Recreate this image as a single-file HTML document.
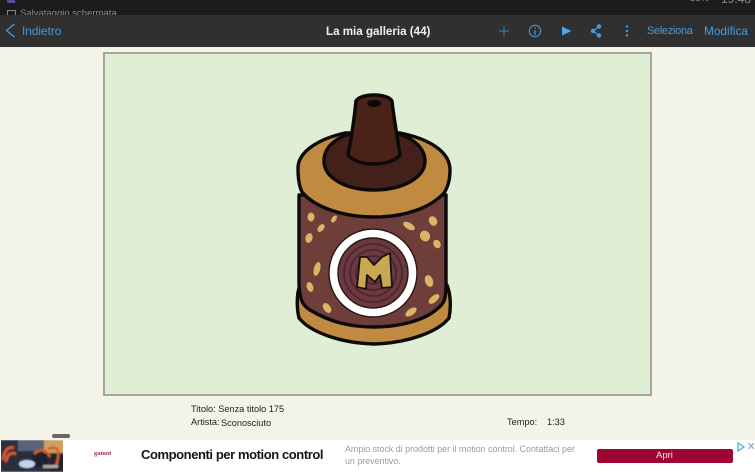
<!DOCTYPE html>
<html><head><meta charset="utf-8">
<style>
html,body{margin:0;padding:0}
body{width:755px;height:472px;position:relative;overflow:hidden;background:#f3f3e7;font-family:"Liberation Sans",sans-serif}
div.t{position:absolute;white-space:nowrap;line-height:1}
.bl{color:#4a9ad6;font-size:11.8px}
</style></head><body>
<div style="position:absolute;left:0;top:0;width:755px;height:15px;background:#1c1c1e;overflow:hidden">
<div style="position:absolute;left:7px;top:-4px;width:8px;height:7px;background:#5a4a9a"></div>
<div style="position:absolute;left:7px;top:10px;width:7px;height:7px;border:1px solid #888"></div>
<div class="t" style="left:20px;top:9px;font-size:9.5px;color:#8a8a8a">Salvataggio schermata</div>
<div class="t" style="left:690px;top:-6px;font-size:9.5px;color:#8a8a8a">33%</div>
<div class="t" style="left:721px;top:-7px;font-size:12px;color:#8a8a8a">19:48</div>
</div>
<div style="position:absolute;left:0;top:15px;width:755px;height:32px;background:#303030"></div>
<svg style="position:absolute;left:0;top:15px" width="755" height="32" fill="none" stroke="#4a9ad6">
<path d="M14.5 9 L6.5 15.5 L14.5 22" stroke-width="1.2"/>
<path d="M504 11V21M499 16H509" stroke-width="1" stroke="#3f7fb0"/>
<circle cx="535" cy="16" r="5.7" stroke-width="1"/><path d="M535 15V20M535 12V13.5" stroke-width="1.2"/>
<path d="M562 11.5 L571.5 16 L562 20.5Z" fill="#4aa6ee" stroke="none"/>
<path d="M599 11.5 L593 16 L599 20.5" stroke-width="1.2"/>
<circle cx="599" cy="11.5" r="2.2" fill="#4a9ad6" stroke="none"/><circle cx="593" cy="16" r="2.2" fill="#4a9ad6" stroke="none"/><circle cx="599" cy="20.5" r="2.2" fill="#4a9ad6" stroke="none"/>
<circle cx="627" cy="11.5" r="1.2" fill="#4a9ad6" stroke="none"/><circle cx="627" cy="16" r="1.2" fill="#4a9ad6" stroke="none"/><circle cx="627" cy="20.5" r="1.2" fill="#4a9ad6" stroke="none"/>
</svg>
<div class="t bl" style="left:22px;top:25.5px">Indietro</div>
<div class="t" style="left:326px;top:25.5px;font-size:11.6px;font-weight:bold;color:#f0f0f0">La mia galleria (44)</div>
<div class="t bl" style="left:647px;top:25.5px;font-size:11px;letter-spacing:-.3px">Seleziona</div>
<div class="t bl" style="left:704px;top:25.5px">Modifica</div>

<svg style="position:absolute;left:0;top:0" width="755" height="472">
<rect x="104" y="53" width="547" height="342" fill="#dfeed5" stroke="#a3a896" stroke-width="2"/>
<g stroke="#0c0a08" stroke-width="3.4" stroke-linejoin="round">
<path d="M300 285 C296 295 297 310 299 318 C310 332 340 343 374 344 C408 343 438 332 449 318 C451 308 451 295 447 285 Z" fill="#c08a40"/>
<path d="M299 195 L299 284 C300 300 302 305 310 310 C330 322 350 327 374 327 C400 327 425 320 437 309 C445 303 446 298 446 284 L446 195 Z" fill="#6e3f3a"/>
<path d="M298 168 C298 152 318 139 345 133 L400 133 C430 139 450 152 450 170 C450 180 448 187 444 193 C430 208 405 217 374 217 C345 217 315 208 302 192 C299 186 298 178 298 168 Z" fill="#c08a40"/>
<path d="M324 161 C324 146 338 137 350 134 L398 134 C414 138 425 149 425 161 C425 178 402 190 374 190 C346 190 324 178 324 161 Z" fill="#43201a"/>
<path d="M356 101 C358 97 366 95 374 95 C382 95 390 97 392 101 C394 120 398 140 400 155 C395 161 385 164 374 164 C363 164 353 161 348 155 C351 140 354 120 356 101 Z" fill="#4a2218"/>
</g>
<ellipse cx="374" cy="103.5" rx="7" ry="3.5" fill="#0c0a08"/>
<g fill="#d9b565">
<ellipse cx="311" cy="217" rx="3.5" ry="4.5"/><ellipse cx="321" cy="228" rx="2.8" ry="4.5" transform="rotate(40 321 228)"/><ellipse cx="334" cy="219" rx="2.2" ry="4" transform="rotate(35 334 219)"/>
<ellipse cx="309" cy="238" rx="3.5" ry="5" transform="rotate(15 309 238)"/><ellipse cx="317" cy="269" rx="3.2" ry="7" transform="rotate(15 317 269)"/><ellipse cx="310" cy="287" rx="3.2" ry="5" transform="rotate(-20 310 287)"/>
<ellipse cx="327" cy="308" rx="3.5" ry="5.5" transform="rotate(-35 327 308)"/>
<ellipse cx="409" cy="226" rx="3.2" ry="6.5" transform="rotate(-60 409 226)"/><ellipse cx="433" cy="221" rx="4" ry="5" transform="rotate(-30 433 221)"/><ellipse cx="425" cy="236" rx="5" ry="5.5" transform="rotate(-30 425 236)"/><ellipse cx="437" cy="244" rx="3.5" ry="4.5" transform="rotate(-30 437 244)"/>
<ellipse cx="429" cy="281" rx="4" ry="6" transform="rotate(-20 429 281)"/><ellipse cx="434" cy="299" rx="3.2" ry="6.5" transform="rotate(50 434 299)"/><ellipse cx="411" cy="312" rx="3.2" ry="6.5" transform="rotate(55 411 312)"/>
</g>
<circle cx="373" cy="273" r="44" fill="#fff" stroke="#2a1512" stroke-width="1.4"/>
<circle cx="373" cy="273" r="35" fill="#6a3a3e" stroke="#2a1512" stroke-width="1.4"/>
<g fill="none" stroke="#4f2433" stroke-width="1.8"><circle cx="373" cy="273" r="29"/><circle cx="373" cy="273" r="23"/><circle cx="373" cy="273" r="17"/><circle cx="373" cy="273" r="11"/></g>
<path d="M360 257 L367 257 L374 265 L382 257 L390 253 L392 287 L382 288 L380 275 L375 282 L367 275 L366 289 L357 287 Z" fill="#c8a850" stroke="#1a0f0a" stroke-width="1.8" stroke-linejoin="round"/>
</svg>

<div class="t" style="left:191px;top:404.5px;font-size:9.2px;color:#222">Titolo: Senza titolo 175</div>
<div class="t" style="left:191px;top:417.5px;font-size:9.2px;color:#222">Artista:</div>
<div class="t" style="left:221px;top:419px;font-size:9.2px;color:#222">Sconosciuto</div>
<div class="t" style="left:507px;top:417.5px;font-size:9.2px;color:#222">Tempo:</div>
<div class="t" style="left:547px;top:417.5px;font-size:9.2px;color:#222">1:33</div>
<div style="position:absolute;left:52px;top:434px;width:18px;height:4px;border-radius:2px;background:#666"></div>

<div style="position:absolute;left:0;top:439.5px;width:755px;height:32.5px;background:#fff"></div>
<svg style="position:absolute;left:0;top:440px" width="64" height="32">
<defs><filter id="b"><feGaussianBlur stdDeviation="0.9"/></filter><clipPath id="c"><rect x="1" y="0" width="62" height="32"/></clipPath></defs>
<g clip-path="url(#c)"><g filter="url(#b)">
<rect x="0" y="0" width="64" height="32" fill="#2a2d3c"/>
<rect x="44" y="0" width="20" height="13" fill="#d0a060"/>
<rect x="18" y="0" width="26" height="11" fill="#5a6478"/>
<rect x="32" y="13" width="16" height="14" fill="#1a2030"/>
<rect x="50" y="14" width="14" height="18" fill="#23232c"/>
<ellipse cx="27" cy="24" rx="8" ry="4" fill="#c4d4f0"/>
<path d="M3 20 C4 10 9 6 14 8 M6 22 C7 14 11 12 16 14" stroke="#d8562a" stroke-width="3" fill="none"/>
<path d="M34 14 C40 8 46 9 50 17 M48 9 C58 5 61 10 56 26" stroke="#d0602c" stroke-width="2.6" fill="none"/>
<rect x="43" y="25" width="15" height="3" fill="#aaa"/>
</g></g>
</svg>
<div class="t" style="left:94px;top:451px;font-size:6.5px;font-weight:bold;font-family:'Liberation Serif',serif;color:#a8284c">gamot</div>
<div class="t" style="left:141px;top:448px;font-size:13px;letter-spacing:-.42px;font-weight:bold;color:#151515">Componenti per motion control</div>
<div class="t" style="left:345px;top:445px;font-size:8.9px;color:#9a9a9a">Ampio stock di prodotti per il motion control. Contattaci per</div>
<div class="t" style="left:345px;top:456.5px;font-size:8.9px;color:#9a9a9a">un preventivo.</div>
<div style="position:absolute;left:596.5px;top:449px;width:136px;height:13.5px;border-radius:2px;background:#9c0630"></div>
<div class="t" style="left:656px;top:451px;font-size:9.5px;color:#f2e8ea">Apri</div>
<svg style="position:absolute;left:735px;top:440px" width="20" height="12" fill="none">
<path d="M3 3 L9 7 L3 11Z" stroke="#4ab4d8" stroke-width="1.3"/>
<path d="M13.5 3 L19 9 M19 3 L13.5 9" stroke="#6aa8d0" stroke-width="1"/>
</svg>
</body></html>
